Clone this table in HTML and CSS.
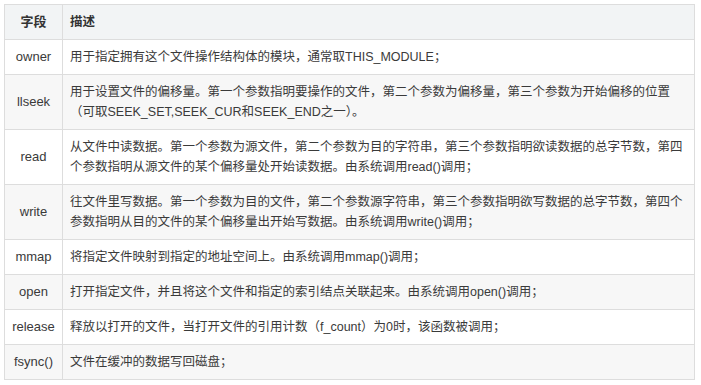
FILE: index.html
```html
<!DOCTYPE html>
<html lang="zh-CN">
<head>
<meta charset="utf-8">
<title>file_operations</title>
<link rel="stylesheet" href="styles.css">
</head>
<body>
<table class="ops">
  <colgroup><col class="c-name"><col class="c-desc"></colgroup>
  <thead>
    <tr><th class="name">字段</th><th class="desc">描述</th></tr>
  </thead>
  <tbody>
    <tr><td class="name">owner</td><td class="desc">用于指定拥有这个文件操作结构体的模块，通常取THIS_MODULE；</td></tr>
    <tr class="alt"><td class="name">llseek</td><td class="desc">用于设置文件的偏移量。第一个参数指明要操作的文件，第二个参数为偏移量，第三个参数为开始偏移的位置<br>（可取SEEK_SET,SEEK_CUR和SEEK_END之一）。</td></tr>
    <tr><td class="name">read</td><td class="desc">从文件中读数据。第一个参数为源文件，第二个参数为目的字符串，第三个参数指明欲读数据的总字节数，第四<br>个参数指明从源文件的某个偏移量处开始读数据。由系统调用read()调用；</td></tr>
    <tr class="alt"><td class="name">write</td><td class="desc">往文件里写数据。第一个参数为目的文件，第二个参数源字符串，第三个参数指明欲写数据的总字节数，第四个<br>参数指明从目的文件的某个偏移量出开始写数据。由系统调用write()调用；</td></tr>
    <tr><td class="name">mmap</td><td class="desc">将指定文件映射到指定的地址空间上。由系统调用mmap()调用；</td></tr>
    <tr class="alt"><td class="name">open</td><td class="desc">打开指定文件，并且将这个文件和指定的索引结点关联起来。由系统调用open()调用；</td></tr>
    <tr><td class="name">release</td><td class="desc">释放以打开的文件，当打开文件的引用计数（f_count）为0时，该函数被调用；</td></tr>
    <tr class="alt"><td class="name">fsync()</td><td class="desc">文件在缓冲的数据写回磁盘；</td></tr>
  </tbody>
</table>
</body>
</html>
```
FILE: styles.css
```css
html, body {
  margin: 0;
  padding: 0;
  background: #fff;
}
body {
  padding: 4px 0 0 4px;
}
.ops {
  border-collapse: collapse;
  width: 691px;
  font-family: "Liberation Sans", "Noto Sans CJK SC", sans-serif;
  font-size: 12.5px;
  line-height: 20px;
  color: #3a3a3a;
  table-layout: fixed;
}
.c-name { width: 58px; }
.ops th, .ops td {
  border: 1px solid #ddd;
  padding: 7px;
  vertical-align: middle;
  white-space: nowrap;
}
.ops thead th {
  background: #f2f4f5;
  font-weight: bold;
  color: #333;
}
.ops .name {
  text-align: center;
  padding-left: 2px;
  padding-right: 2px;
  font-size: 13px;
}
.ops .desc {
  text-align: left;
  padding-left: 7px;
}
.ops tr.alt td {
  background: #f7f7f7;
}
```
